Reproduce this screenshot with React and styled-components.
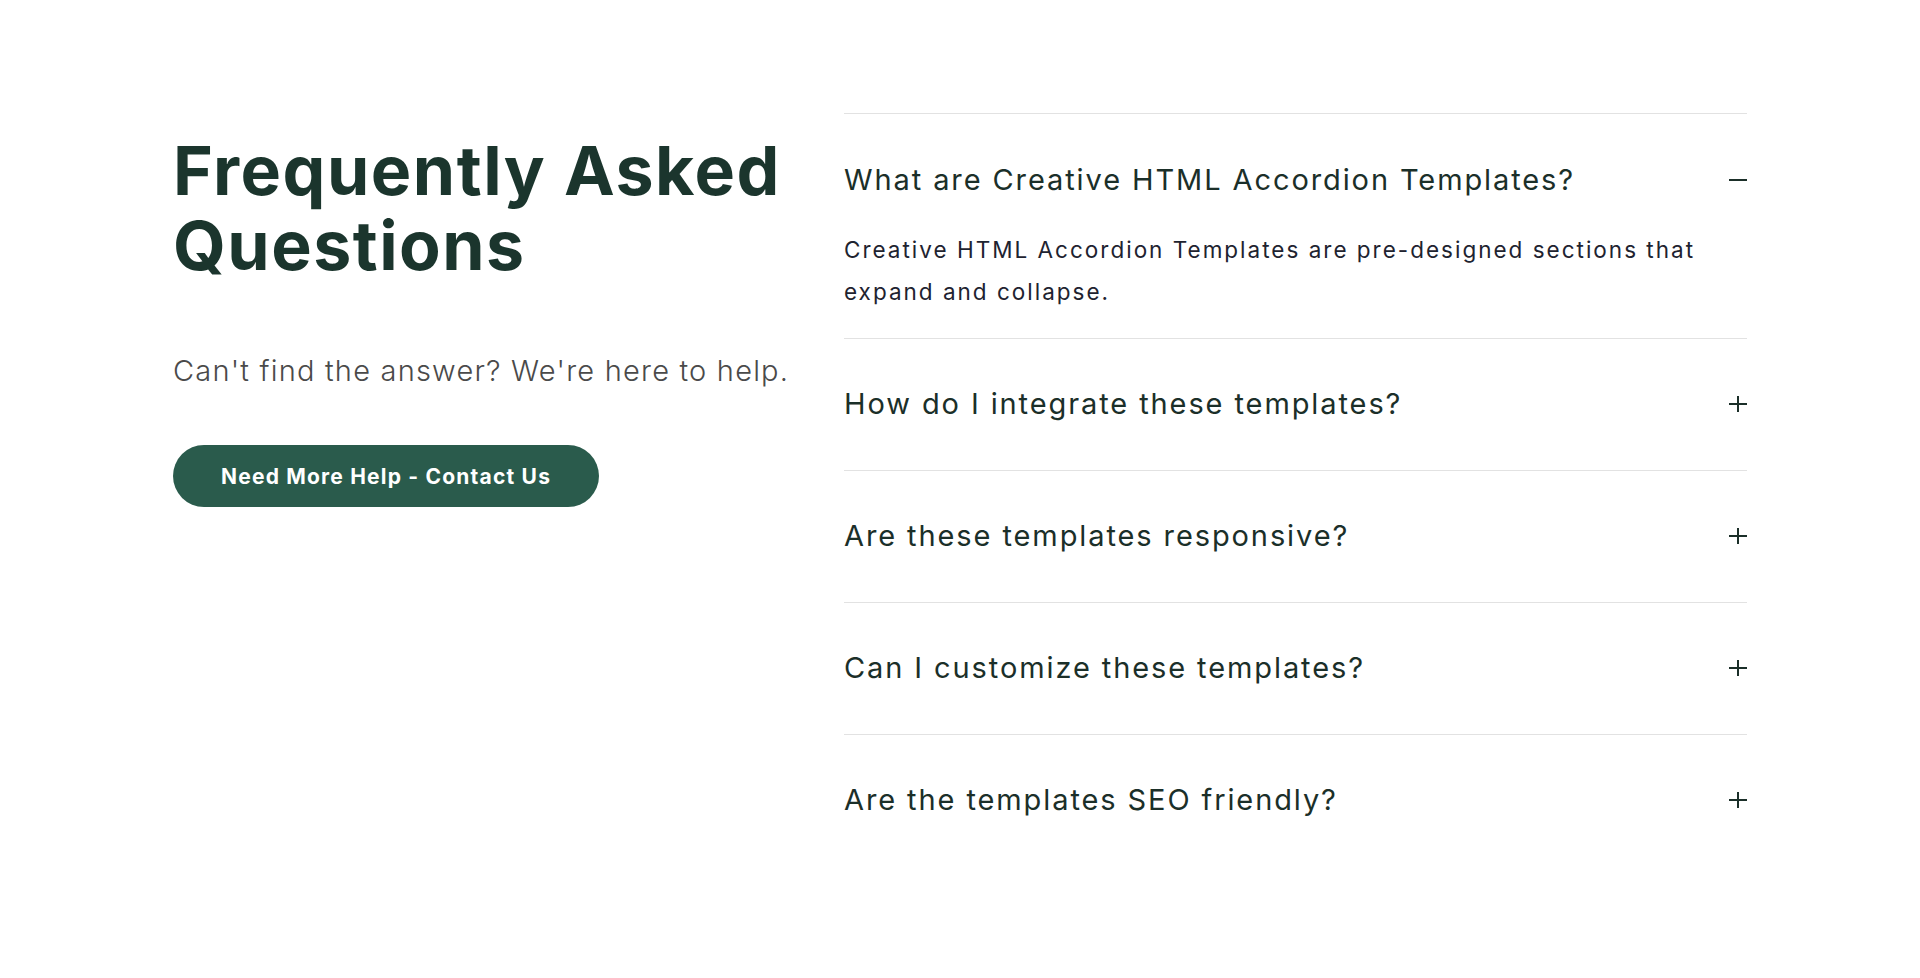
import React, { useState } from "react";
import styled, { createGlobalStyle } from "styled-components";

const fontStack = `Inter, "Open Sans", "Liberation Sans", sans-serif`;

const GlobalStyle = createGlobalStyle`
  html, body {
    margin: 0;
    padding: 0;
    background: #ffffff;
  }
  body {
    font-family: ${fontStack};
    -webkit-font-smoothing: antialiased;
  }
  * {
    box-sizing: border-box;
  }
`;

const Section = styled.section`
  display: grid;
  grid-template-columns: 630px 1fr;
  column-gap: 41px;
  padding: 113px 173px 80px;
  min-height: 978px;
`;

const Intro = styled.div`
  display: flex;
  flex-direction: column;
  align-items: flex-start;
  padding-top: 20px;
`;

const Heading = styled.h2`
  margin: 0;
  font-size: 68px;
  line-height: 1.1;
  font-weight: 700;
  letter-spacing: 1.5px;
  color: #1b352d;
  white-space: nowrap;
`;

const Lead = styled.p`
  margin: 68px 0 0;
  font-size: 29px;
  font-weight: 300;
  line-height: 1.4;
  letter-spacing: 1.2px;
  color: #4a4a4a;
  white-space: nowrap;
`;

const HelpButton = styled.button`
  margin-top: 54px;
  height: 62px;
  padding: 0 48px;
  border: none;
  border-radius: 999px;
  background: #2a5b4c;
  color: #ffffff;
  font-family: ${fontStack};
  font-size: 21px;
  font-weight: 700;
  letter-spacing: 1.2px;
  cursor: pointer;
`;

const List = styled.div`
  display: flex;
  flex-direction: column;
`;

const Item = styled.div`
  border-top: 1px solid #e2e2e2;
`;

const Question = styled.button`
  width: 100%;
  display: flex;
  align-items: center;
  justify-content: space-between;
  gap: 24px;
  padding: 44.5px 0 ${(p) => (p.$open ? "28px" : "44.5px")};
  border: none;
  background: transparent;
  text-align: left;
  font-family: ${fontStack};
  font-size: 29px;
  font-weight: 400;
  line-height: 42px;
  letter-spacing: 1.9px;
  color: #1b2f29;
  cursor: pointer;
`;

const Answer = styled.p`
  margin: 0;
  padding: 0 40px 25px 0;
  font-size: 22.5px;
  line-height: 42px;
  font-weight: 400;
  letter-spacing: 2px;
  color: #1e2330;
`;

const Toggle = ({ open }) => (
  <svg width="18" height="18" viewBox="0 0 18 18" fill="none" aria-hidden="true">
    <line x1="0" y1="9" x2="18" y2="9" stroke="#1b2f29" strokeWidth="2" />
    {!open && <line x1="9" y1="1" x2="9" y2="17" stroke="#1b2f29" strokeWidth="2" />}
  </svg>
);

const faqs = [
  {
    q: "What are Creative HTML Accordion Templates?",
    a: "Creative HTML Accordion Templates are pre-designed sections that expand and collapse.",
  },
  {
    q: "How do I integrate these templates?",
    a: "Copy the markup and styles into your project and link the script.",
  },
  {
    q: "Are these templates responsive?",
    a: "Yes, every template adapts to phones, tablets and desktops.",
  },
  {
    q: "Can I customize these templates?",
    a: "Colours, fonts, spacing and icons can all be changed.",
  },
  {
    q: "Are the templates SEO friendly?",
    a: "They use semantic HTML so search engines can read the content.",
  },
];

const App = () => {
  const [openIndex, setOpenIndex] = useState(0);

  return (
    <>
      <GlobalStyle />
      <Section>
        <Intro>
          <Heading>
            Frequently Asked
            <br />
            Questions
          </Heading>
          <Lead>Can't find the answer? We're here to help.</Lead>
          <HelpButton>Need More Help - Contact Us</HelpButton>
        </Intro>
        <List>
          {faqs.map((item, i) => {
            const open = openIndex === i;
            return (
              <Item key={i}>
                <Question $open={open} onClick={() => setOpenIndex(open ? -1 : i)}>
                  <span>{item.q}</span>
                  <Toggle open={open} />
                </Question>
                {open && <Answer>{item.a}</Answer>}
              </Item>
            );
          })}
        </List>
      </Section>
    </>
  );
};

export default App;
